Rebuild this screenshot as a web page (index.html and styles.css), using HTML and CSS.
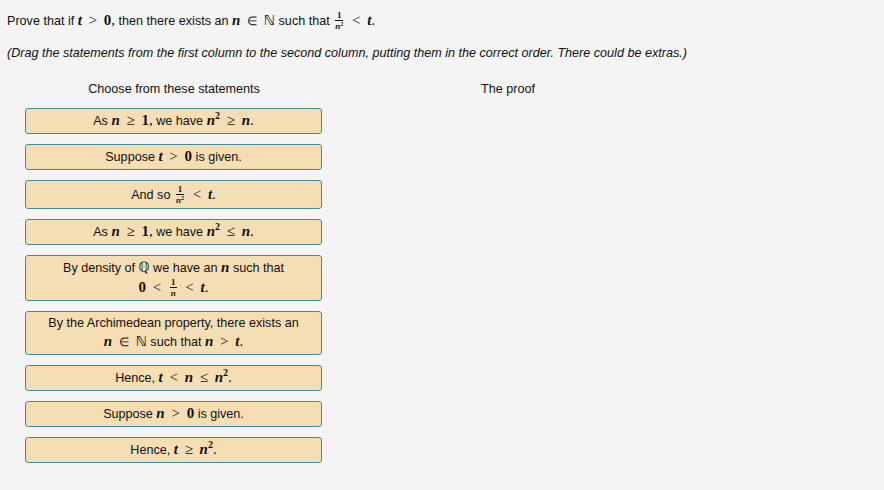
FILE: index.html
```html
<!DOCTYPE html>
<html lang="en">

<head>
    <meta charset="UTF-8" />
    <meta name="viewport" content="width=device-width, initial-scale=1.0" />
    <link rel="stylesheet" href="styles.css">
</head>

<body>
    <p class="question">
        Prove that if <span class="m"><i>t</i> <span class="op">&gt;</span> <b>0</b>,</span> then there exists an
        <span class="m"><i>n</i> <span class="op in">&isin;</span> <span class="bb">&Nopf;</span></span> such that
        <span class="m"><span class="frac"><span class="num">1</span><span class="den"><i>n</i><sup>2</sup></span></span> <span class="op">&lt;</span> <i>t</i>.</span>
    </p>
    <p class="hint">(Drag the statements from the first column to the second column, putting them in the correct order. There could be extras.)</p>

    <div class="columns">
        <div class="column">
            <p class="col-title">Choose from these statements</p>

            <div class="card">As <span class="m"><i>n</i> <span class="op">&ge;</span> <b>1</b>,</span> we have <span class="m"><i>n</i><sup>2</sup> <span class="op">&ge;</span> <i>n</i>.</span></div>

            <div class="card">Suppose <span class="m"><i>t</i> <span class="op">&gt;</span> <b>0</b></span> is given.</div>

            <div class="card card-frac">And so <span class="m"><span class="frac"><span class="num">1</span><span class="den"><i>n</i><sup>2</sup></span></span> <span class="op">&lt;</span> <i>t</i>.</span></div>

            <div class="card">As <span class="m"><i>n</i> <span class="op">&ge;</span> <b>1</b>,</span> we have <span class="m"><i>n</i><sup>2</sup> <span class="op">&le;</span> <i>n</i>.</span></div>

            <div class="card">By density of <span class="bb">&Qopf;</span> we have an <span class="m"><i>n</i></span> such that<br>
                <span class="m"><b>0</b> <span class="op">&lt;</span> <span class="frac"><span class="num">1</span><span class="den"><i>n</i></span></span> <span class="op">&lt;</span> <i>t</i>.</span></div>

            <div class="card card-tight">By the Archimedean property, there exists an<br>
                <span class="m"><i>n</i> <span class="op in">&isin;</span> <span class="bb">&Nopf;</span></span> such that <span class="m"><i>n</i> <span class="op">&gt;</span> <i>t</i>.</span></div>

            <div class="card">Hence, <span class="m"><i>t</i> <span class="op">&lt;</span> <i>n</i> <span class="op">&le;</span> <i>n</i><sup>2</sup>.</span></div>

            <div class="card">Suppose <span class="m"><i>n</i> <span class="op">&gt;</span> <b>0</b></span> is given.</div>

            <div class="card">Hence, <span class="m"><i>t</i> <span class="op">&ge;</span> <i>n</i><sup>2</sup>.</span></div>
        </div>

        <div class="column">
            <p class="col-title">The proof</p>
        </div>
    </div>
</body>

</html>
```

FILE: styles.css
```css
body {
    font-family: 'Liberation Sans', Arial, sans-serif;
    font-size: 12.6px;
    color: #111;
    background-color: #f4f4f4;
    margin: 0;
    padding: 0 7px;
}

p {
    margin: 0;
    line-height: 18px;
}

.question {
    margin-top: 11px;
}

.hint {
    margin-top: 14px;
    font-style: italic;
}

.columns {
    display: grid;
    grid-template-columns: 334px 334px;
    margin-top: 18px;
}

.column {
    display: flex;
    flex-direction: column;
    gap: 10px;
}

.col-title {
    text-align: center;
}

.card {
    margin: 0 19px 0 18px;
    padding: 2px 6px;
    line-height: 20px;
    text-align: center;
    background-color: #f5deb3;
    border: 1px solid #42908e;
    border-radius: 3px;
}

.card-frac {
    padding: 4px 6px 3px;
}

.card-tight {
    line-height: 19px;
    padding: 2px 6px;
}

/* math bits */
.m {
    font-family: 'Liberation Serif', 'Times New Roman', serif;
    font-size: 15px;
    line-height: 12px;
    white-space: nowrap;
}

.m i {
    font-weight: bold;
}

.m b {
    font-style: normal;
}

.op {
    font-weight: normal;
    padding: 0 3px;
}

.op.in {
    font-size: 12px;
}

.m sup {
    font-size: 10px;
    font-weight: bold;
    vertical-align: 6px;
    line-height: 0;
}

.bb {
    font-family: 'DejaVu Sans', sans-serif;
    font-size: 14px;
    line-height: 12px;
}

.frac {
    display: inline-block;
    text-align: center;
    vertical-align: -4px;
    font-size: 9px;
    line-height: 8px;
    font-weight: bold;
    margin: 0 2px;
}

.frac .num {
    display: block;
    padding: 0 1px 1px;
    border-bottom: 1px solid #111;
}

.frac .den {
    display: block;
    padding-top: 1px;
}

.frac .den i {
    font-size: 9px;
}

.frac sup {
    font-size: 6px;
    vertical-align: 3px;
}
```
